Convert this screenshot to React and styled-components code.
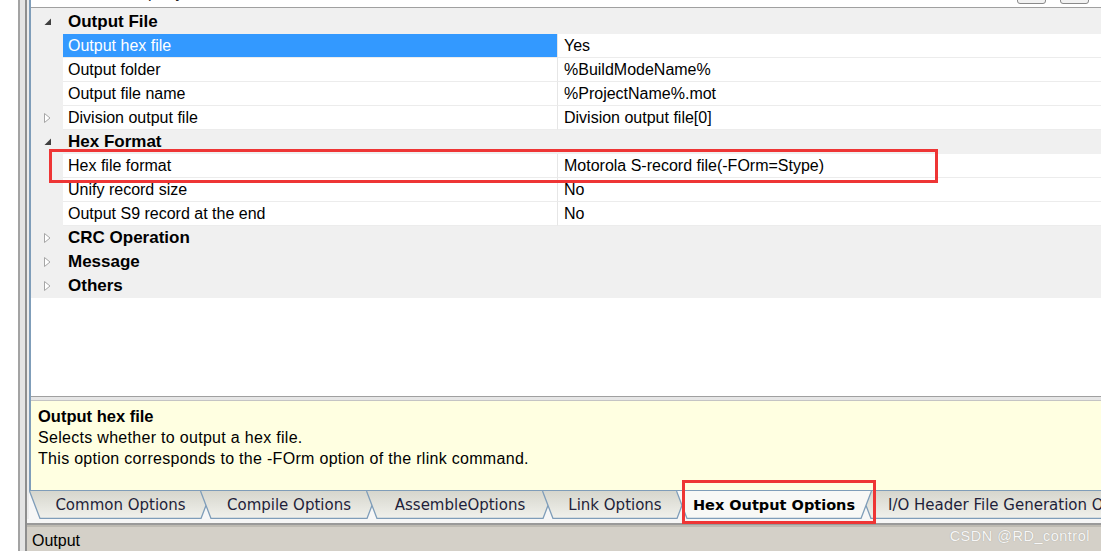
import React from 'react';
import styled, { createGlobalStyle } from 'styled-components';

const GlobalStyle = createGlobalStyle`
  html, body {
    margin: 0;
    padding: 0;
    background: #ffffff;
    overflow: hidden;
  }
  body {
    font-family: "Liberation Sans", Arial, sans-serif;
    color: #000;
  }
`;

const Page = styled.div`
  position: relative;
  width: 1101px;
  height: 551px;
  display: flex;
  overflow: hidden;
  background: #ffffff;
`;

const Gutter = styled.div`
  width: 18px;
  flex: none;
  background: #ffffff;
`;

const Rail = styled.div`
  width: 9px;
  flex: none;
  background: linear-gradient(to right, #a3a3a3 0 2px, #e4e4e4 2px 7px, #8e8e8e 7px 9px);
`;

const Content = styled.div`
  flex: 1;
  min-width: 0;
  display: flex;
  flex-direction: column;
`;

const Upper = styled.div`
  height: 519px;
  flex: none;
  padding-left: 2px;
  background: #ececec;
  display: flex;
`;

const Panel = styled.div`
  flex: 1;
  min-width: 0;
  display: flex;
  flex-direction: column;
  border-left: 2px solid #7f9db9;
  background: #ffffff;
`;

/* only the lower edge of the pane title bar is visible in the shot */
const Header = styled.div`
  height: 7px;
  flex: none;
  display: flex;
  align-items: flex-end;
  overflow: hidden;
  padding: 0 12px 0 19px;
  border-bottom: 1px solid #a0a0a0;
  background: #ffffff;
`;

const HeaderTitle = styled.span`
  display: flex;
  align-items: flex-end;
  gap: 8px;
  margin-bottom: 4px;
  font-size: 16px;
  line-height: 20px;
  color: #222;

  svg {
    margin-bottom: 2px;
  }
`;

const HeaderButton = styled.span`
  width: 27px;
  height: 20px;
  margin-bottom: 3px;
  border: 1px solid #8a8a8a;
  border-radius: 3px;
  background: #f2f2f2;
  margin-left: ${({ $first }) => ($first ? 'auto' : '14px')};
  flex: none;
`;

const Grid = styled.div`
  flex: none;
  padding-top: 2px;
  background: #f0f0f0;
`;

const Row = styled.div`
  height: 24px;
  display: grid;
  grid-template-columns: 32px 495px 1fr;
  background: #f0f0f0;
`;

const Margin = styled.div`
  display: flex;
  align-items: center;
  padding-left: 13px;
`;

const GroupLabel = styled.div`
  grid-column: 2 / 4;
  padding-left: 5px;
  font-size: 17px;
  font-weight: bold;
  line-height: 24px;
  white-space: nowrap;
`;

const Cell = styled.div`
  height: 23px;
  border-bottom: 1px solid #ececec;
  background: ${({ $selected }) => ($selected ? '#3399ff' : '#ffffff')};
  color: ${({ $selected }) => ($selected ? '#ffffff' : '#000000')};
  border-right: ${({ $label }) => ($label ? '1px solid #e6e6e6' : 'none')};
  padding-left: ${({ $label }) => ($label ? '5px' : '6px')};
  font-size: 16px;
  line-height: 23px;
  white-space: nowrap;
  overflow: hidden;
`;

const Filler = styled.div`
  flex: 1;
  background: #ffffff;
`;

const Splitter = styled.div`
  height: 3px;
  flex: none;
  border-top: 1px solid #a0a0a0;
  border-bottom: 1px solid #c4c4c4;
  background: #e6e6e6;
`;

const Description = styled.div`
  height: 84px;
  flex: none;
  padding: 5px 7px 0;
  background: #ffffe1;
  font-size: 16px;
  line-height: 21px;
  letter-spacing: 0.3px;
`;

const DescTitle = styled.div`
  font-weight: bold;
  font-size: 16.5px;
  letter-spacing: 0;
`;

const TabStrip = styled.div`
  height: 28px;
  flex: none;
  display: flex;
  margin-left: -2px;
  border-top: 1px solid #7f9db9;
  background: #f7f7f7;
`;

const TabItem = styled.div`
  position: relative;
  flex: none;
  width: ${({ $w }) => $w}px;
  height: 28px;
  margin-left: ${({ $first }) => ($first ? '0' : '-12px')};
  z-index: ${({ $active }) => ($active ? 2 : 1)};
  display: flex;
  align-items: center;
  justify-content: ${({ $start }) => ($start ? 'flex-start' : 'center')};
  padding-left: ${({ $start }) => ($start ? '28px' : '0')};
  box-sizing: border-box;
`;

const TabShape = styled.svg`
  position: absolute;
  left: 0;
  top: 0;
`;

const TabLabel = styled.span`
  position: relative;
  font-family: "DejaVu Sans", Verdana, sans-serif;
  font-size: ${({ $active }) => ($active ? '14.5px' : '15px')};
  font-weight: ${({ $active }) => ($active ? 'bold' : 'normal')};
  color: ${({ $active }) => ($active ? '#000000' : '#1f1f3a')};
  white-space: nowrap;
`;

const Spacer = styled.div`
  height: 4px;
  flex: none;
  background: #f6f6f6;
`;

const Separator = styled.div`
  height: 4px;
  flex: none;
  background: linear-gradient(to bottom, #9a9a9a 0 2px, #bdbab2 2px 4px);
`;

const OutputBar = styled.div`
  flex: 1;
  display: flex;
  justify-content: space-between;
  background: #d4d0c8;
  padding: 0 11px 0 5px;
  font-size: 16px;
`;

const OutputLabel = styled.span`
  align-self: flex-end;
  line-height: 20px;
`;

const Watermark = styled.span`
  font-size: 14.5px;
  line-height: 18px;
  color: #f7f7f7;
  text-shadow: 0 0 1px #9a978f;
  letter-spacing: 0.5px;
`;

const Annotation = styled.div`
  position: absolute;
  left: ${({ $x }) => $x}px;
  top: ${({ $y }) => $y}px;
  width: ${({ $w }) => $w}px;
  height: ${({ $h }) => $h}px;
  border: 3px solid #ee3535;
  box-sizing: border-box;
  pointer-events: none;
  z-index: 5;
`;

const OpenArrow = () => (
  <svg width="8" height="8" viewBox="0 0 8 8">
    <polygon points="7,0.5 7,7 0.5,7" fill="#404040" />
  </svg>
);

const ClosedArrow = () => (
  <svg width="7" height="10" viewBox="0 0 7 10">
    <polygon points="0.5,0.5 6,5 0.5,9.5" fill="#ffffff" stroke="#a6a6a6" />
  </svg>
);

const PropIcon = () => (
  <svg width="10" height="14" viewBox="0 0 10 14">
    <path d="M2 1 L8 1 L8 10 L5 13 L2 10 Z" fill="#8a2e1e" />
  </svg>
);

const rows = [
  { group: true, label: 'Output File', open: true },
  { label: 'Output hex file', value: 'Yes', selected: true },
  { label: 'Output folder', value: '%BuildModeName%' },
  { label: 'Output file name', value: '%ProjectName%.mot' },
  { label: 'Division output file', value: 'Division output file[0]', sub: true },
  { group: true, label: 'Hex Format', open: true },
  { label: 'Hex file format', value: 'Motorola S-record file(-FOrm=Stype)' },
  { label: 'Unify record size', value: 'No' },
  { label: 'Output S9 record at the end', value: 'No' },
  { group: true, label: 'CRC Operation' },
  { group: true, label: 'Message' },
  { group: true, label: 'Others' },
];

const tabs = [
  { label: 'Common Options', w: 183 },
  { label: 'Compile Options', w: 178 },
  { label: 'AssembleOptions', w: 188 },
  { label: 'Link Options', w: 146 },
  { label: 'Hex Output Options', w: 196, active: true },
  { label: 'I/O Header File Generation Options', w: 320, start: true },
];

const Tab = ({ label, w, active, start, first, id }) => {
  const s = 11;
  return (
    <TabItem $w={w} $active={active} $start={start} $first={first}>
      <TabShape width={w} height={28} viewBox={`0 0 ${w} 28`}>
        <defs>
          <linearGradient id={id} x1="0" y1="0" x2="0" y2="1">
            <stop offset="0" stopColor={active ? '#f8f8f6' : '#d6d6cd'} />
            <stop offset="1" stopColor={active ? '#f8f8f6' : '#f1f1ec'} />
          </linearGradient>
        </defs>
        <polygon points={`0,0 ${s},27.5 ${w - s},27.5 ${w},0`} fill={`url(#${id})`} />
        <polyline
          points={`0.5,0 ${s},27.5 ${w - s},27.5 ${w - 0.5},0`}
          fill="none"
          stroke="#7f9db9"
          strokeWidth="1.3"
        />
      </TabShape>
      <TabLabel $active={active}>{label}</TabLabel>
    </TabItem>
  );
};

export default function App() {
  return (
    <>
      <GlobalStyle />
      <Page>
        <Gutter />
        <Rail />
        <Content>
          <Upper>
            <Panel>
              <Header>
                <HeaderTitle>
                  <PropIcon />
                  <span>CC-RX Property</span>
                </HeaderTitle>
                <HeaderButton $first />
                <HeaderButton />
              </Header>
              <Grid>
                {rows.map((r) =>
                  r.group ? (
                    <Row key={r.label}>
                      <Margin>{r.open ? <OpenArrow /> : <ClosedArrow />}</Margin>
                      <GroupLabel>{r.label}</GroupLabel>
                    </Row>
                  ) : (
                    <Row key={r.label}>
                      <Margin>{r.sub && <ClosedArrow />}</Margin>
                      <Cell $label $selected={r.selected}>
                        {r.label}
                      </Cell>
                      <Cell>{r.value}</Cell>
                    </Row>
                  )
                )}
              </Grid>
              <Filler />
              <Splitter />
              <Description>
                <DescTitle>Output hex file</DescTitle>
                <div>Selects whether to output a hex file.</div>
                <div>This option corresponds to the -FOrm option of the rlink command.</div>
              </Description>
              <TabStrip>
                {tabs.map((t, i) => (
                  <Tab key={t.label} {...t} first={i === 0} id={`tabfill${i}`} />
                ))}
              </TabStrip>
            </Panel>
          </Upper>
          <Spacer />
          <Separator />
          <OutputBar>
            <OutputLabel>Output</OutputLabel>
            <Watermark>CSDN @RD_control</Watermark>
          </OutputBar>
        </Content>
        <Annotation $x={49} $y={149} $w={889} $h={34} />
        <Annotation $x={682} $y={480} $w={194} $h={44} />
      </Page>
    </>
  );
}
